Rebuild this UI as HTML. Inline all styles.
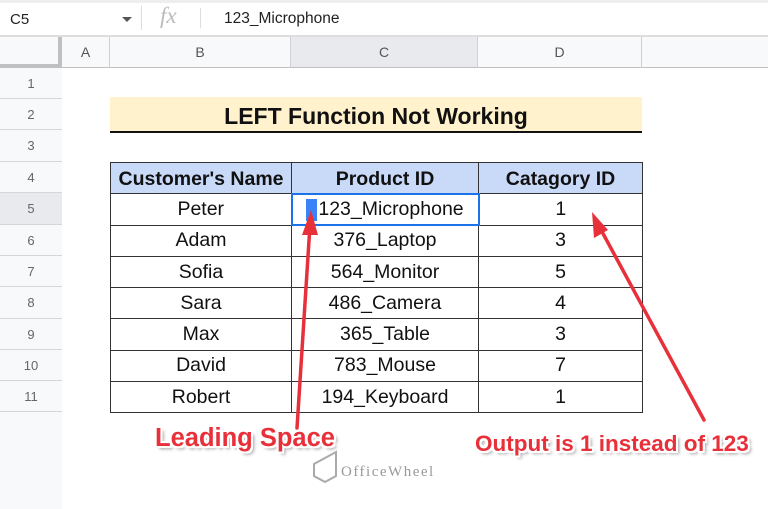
<!DOCTYPE html>
<html><head><meta charset="utf-8"><style>
*{margin:0;padding:0;box-sizing:border-box}
body{width:768px;height:509px;background:#fff;position:relative;overflow:hidden;font-family:"Liberation Sans",Arial,sans-serif}
.abs{position:absolute}
.rn{position:absolute;left:0;width:62px;text-align:center;font-size:13px;color:#666;border-bottom:1px solid #d6d6d6;background:#f8f9fa}
.ch{position:absolute;top:37px;height:31px;line-height:31px;text-align:center;font-size:14px;color:#555;border-right:1px solid #d0d0d0;border-bottom:1px solid #c0c0c0;background:#f8f9fa}
table{position:absolute;left:110px;top:162px;border-collapse:collapse;font-size:19.5px;table-layout:fixed}
td{border:1px solid #333;height:31.3px;text-align:center;padding:0;color:#111;white-space:nowrap}
th{border:1px solid #333;height:31.3px;background:#c9daf8;font-size:19.5px;font-weight:bold;color:#111;white-space:nowrap;padding-top:3px}
.ann{position:absolute;color:#e8303a;font-weight:bold;white-space:nowrap;text-shadow:-2px -2px 0 #fff,2px -2px 0 #fff,-2px 2px 0 #fff,2px 2px 0 #fff,0 2px 0 #fff,0 -2px 0 #fff,2px 0 0 #fff,-2px 0 0 #fff,3px 3px 3px rgba(0,0,0,.4)}
</style></head><body>
<div class="abs" style="left:0;top:0;width:768px;height:37px;border-top:3px solid #eee;border-bottom:2px solid #ddd"></div>
<div class="abs" style="left:10px;top:11px;font-size:15px;color:#222">C5</div>
<div class="abs" style="left:122px;top:17px;width:0;height:0;border-left:5px solid transparent;border-right:5px solid transparent;border-top:5px solid #555"></div>
<div class="abs" style="left:141px;top:6px;width:1px;height:24px;background:#ddd"></div>
<div class="abs" style="left:160px;top:3px;font-size:23px;color:#bbb;font-family:'Liberation Serif',serif;font-style:italic">fx</div>
<div class="abs" style="left:200px;top:8px;width:1px;height:20px;background:#ddd"></div>
<div class="abs" style="left:224px;top:10px;font-size:15.5px;color:#222">123_Microphone</div>
<div class="abs" style="left:0;top:37px;width:62px;height:31px;background:#f8f9fa;border-right:4px solid #c0c0c0;border-bottom:4px solid #c0c0c0"></div>
<div class="ch" style="left:62px;width:48px">A</div>
<div class="ch" style="left:110px;width:181px">B</div>
<div class="ch" style="left:291px;width:187px;background:#e8eaed">C</div>
<div class="ch" style="left:478px;width:164px">D</div>
<div class="ch" style="left:642px;width:126px;border-right:none"></div>
<div class="abs" style="left:61px;top:68px;width:1px;height:441px;background:#ccc"></div>
<div class="rn" style="top:68px;height:31px;line-height:31px">1</div>
<div class="rn" style="top:99px;height:31px;line-height:31px">2</div>
<div class="rn" style="top:130px;height:32px;line-height:32px">3</div>
<div class="rn" style="top:162px;height:31px;line-height:31px">4</div>
<div class="rn" style="top:193px;height:32px;line-height:32px;background:#e8eaed">5</div>
<div class="rn" style="top:225px;height:31px;line-height:31px">6</div>
<div class="rn" style="top:256px;height:31px;line-height:31px">7</div>
<div class="rn" style="top:287px;height:32px;line-height:32px">8</div>
<div class="rn" style="top:319px;height:31px;line-height:31px">9</div>
<div class="rn" style="top:350px;height:31px;line-height:31px">10</div>
<div class="rn" style="top:381px;height:31px;line-height:31px">11</div>
<div class="rn" style="top:412px;height:97px;border-bottom:none"></div>
<div class="abs" style="left:110px;top:97px;width:532px;height:36px;background:#fff2cc;border-bottom:2px solid #111;text-align:center;line-height:38px;font-size:23px;font-weight:bold;color:#111">LEFT Function Not Working</div>
<table>
<colgroup><col style="width:181px"><col style="width:187px"><col style="width:164px"></colgroup>
<tr><th>Customer's Name</th><th>Product ID</th><th>Catagory ID</th></tr>
<tr><td>Peter</td><td style="position:relative;border:2px solid #1a73e8"><span style="display:inline-block;width:11px;height:22px;background:#3b82f6;vertical-align:middle;margin-right:1px"></span>123_Microphone</td><td>1</td></tr>
<tr><td>Adam</td><td>376_Laptop</td><td>3</td></tr>
<tr><td>Sofia</td><td>564_Monitor</td><td>5</td></tr>
<tr><td>Sara</td><td>486_Camera</td><td>4</td></tr>
<tr><td>Max</td><td>365_Table</td><td>3</td></tr>
<tr><td>David</td><td>783_Mouse</td><td>7</td></tr>
<tr><td>Robert</td><td>194_Keyboard</td><td>1</td></tr>
</table>
<svg class="abs" style="left:0;top:0" width="768" height="509">
<g stroke="#e8303a" stroke-width="3.5" fill="#e8303a" stroke-linecap="round">
<line x1="297" y1="428" x2="310" y2="225"/>
<polygon points="311,210 302,235 318,235" stroke="none"/>
<line x1="704" y1="420" x2="600" y2="228"/>
<polygon points="592,212 594,238 608,230" stroke="none"/>
</g>
<g fill="none" stroke="#aaa" stroke-width="2"><polygon points="325,458 336,452 336,476 325,482 314,476 314,464"/></g>
<text x="341" y="476" font-family="Liberation Serif,serif" font-size="15" fill="#999" letter-spacing="1.5">OfficeWheel</text>
</svg>
<div class="ann" style="left:155px;top:424px;font-size:25.5px">Leading Space</div>
<div class="ann" style="left:475px;top:431px;font-size:22.5px">Output is 1 instead of 123</div>
</body></html>
